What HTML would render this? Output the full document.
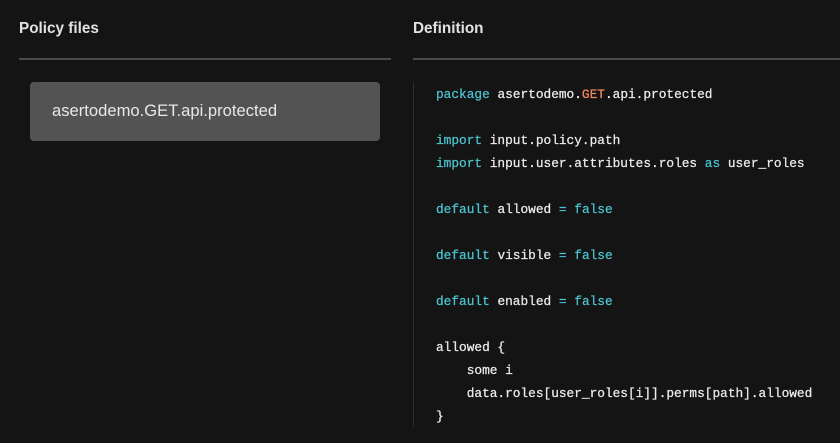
<!DOCTYPE html>
<html><head><style>
body{margin:0;width:840px;height:443px;background:#141414;overflow:hidden;font-family:"Liberation Sans",sans-serif;position:relative;color:#e6e6e6}
.h{position:absolute;top:20px;font-weight:bold;font-size:15.3px;color:#e2e2e2}
.line{position:absolute;top:58px;height:2px;background:#4a4a4a}
.box{position:absolute;left:30px;top:82px;width:350px;height:59px;background:#535353;border-radius:4px}
.box span{position:absolute;left:22px;top:19px;font-size:16.6px;color:#e8e8e8}
.vb{position:absolute;left:413px;top:82px;width:1px;height:345px;background:#2c2c2c}
pre{position:absolute;left:436px;top:83px;margin:0;font-family:"Liberation Mono","DejaVu Sans Mono",monospace;font-size:12.8px;line-height:23px;color:#ececec;-webkit-text-stroke:0.25px #ececec}
.k{color:#4cc4d0;-webkit-text-stroke-color:#4cc4d0}.o{color:#f08a5d;-webkit-text-stroke-color:#f08a5d}
</style></head><body>
<div class="h" style="left:19px">Policy files</div>
<div class="h" style="left:413px">Definition</div>
<div class="line" style="left:19px;width:372px"></div>
<div class="line" style="left:413px;width:427px"></div>
<div class="box"><span>asertodemo.GET.api.protected</span></div>
<div class="vb"></div>
<pre><span class="k">package</span> asertodemo.<span class="o">GET</span>.api.protected

<span class="k">import</span> input.policy.path
<span class="k">import</span> input.user.attributes.roles <span class="k">as</span> user_roles

<span class="k">default</span> allowed <span class="k">=</span> <span class="k">false</span>

<span class="k">default</span> visible <span class="k">=</span> <span class="k">false</span>

<span class="k">default</span> enabled <span class="k">=</span> <span class="k">false</span>

allowed {
    some i
    data.roles[user_roles[i]].perms[path].allowed
}</pre>
</body></html>
